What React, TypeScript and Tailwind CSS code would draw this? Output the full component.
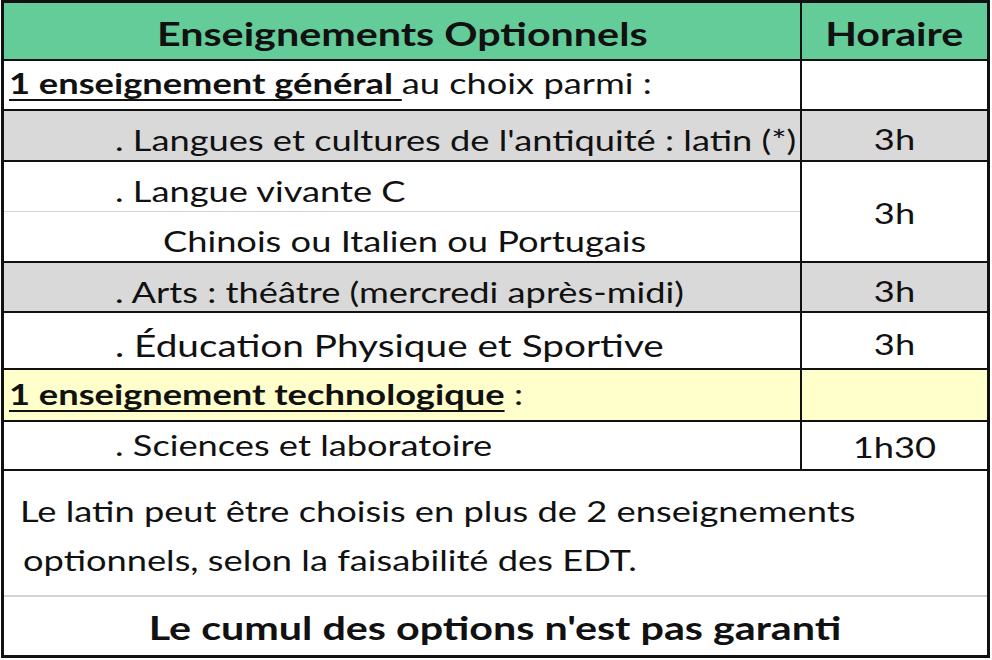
const font = { fontFamily: 'Lato, "Open Sans", sans-serif' };

// Excel export: text looks stretched horizontally, so every label is widened with scale-x-125
function Txt({ children, className = '' }: { children: React.ReactNode; className?: string }) {
  return <span className={`inline-block scale-x-125 leading-none whitespace-nowrap ${className}`}>{children}</span>;
}

function Row({
  bg = 'bg-white',
  h,
  lpad,
  rpad,
  left,
  right,
}: {
  bg?: string;
  h: string;
  lpad: string;
  rpad?: string;
  left: React.ReactNode;
  right?: React.ReactNode;
}) {
  return (
    <div className={`flex border-b-2 border-[#111] ${bg} ${h}`}>
      <div className={`w-[798px] shrink-0 border-r-2 border-[#111] flex items-end overflow-hidden ${lpad}`}>
        {left}
      </div>
      <div className={`flex-1 flex items-end justify-center ${rpad ?? ''}`}>{right}</div>
    </div>
  );
}

export default function App() {
  return (
    <div className="w-[992px] h-[660px] bg-white text-[#111]" style={font}>
      <div className="ml-[1px] w-[989px] border-[3px] border-[#111]">
        {/* header */}
        <div className="flex h-[58px] border-b-2 border-[#111] bg-[#63cc98]">
          <div className="w-[798px] shrink-0 border-r-2 border-[#111] flex items-end justify-center pb-[9px]">
            <Txt className="text-[33px] font-bold">Enseignements Optionnels</Txt>
          </div>
          <div className="flex-1 flex items-end justify-center pb-[9px]">
            <Txt className="text-[33px] font-bold">Horaire</Txt>
          </div>
        </div>

        <Row
          h="h-[50px]"
          lpad="pb-[12px] pl-[5px]"
          left={
            <Txt className="origin-left text-[29px]">
              <span className="font-bold underline underline-offset-[5px] decoration-2 [text-decoration-skip-ink:none]">
                1 enseignement général{' '}
              </span>
              au choix parmi :
            </Txt>
          }
        />
        <Row
          h="h-[51px]"
          bg="bg-[#d9d9d9]"
          lpad="pb-[6px] pl-[111px]"
          rpad="pb-[7px]"
          left={<Txt className="origin-left text-[29px]">. Langues et cultures de l'antiquité : latin (*)</Txt>}
          right={<Txt className="text-[29px]">3h</Txt>}
        />

        {/* langue vivante, horaire fusionné sur deux lignes */}
        <div className="flex h-[101px] border-b-2 border-[#111] bg-white">
          <div className="w-[798px] shrink-0 border-r-2 border-[#111] flex flex-col">
            <div className="h-[50px] border-b border-[#d4d4d4] flex items-end pb-[6px] pl-[111px]">
              <Txt className="origin-left text-[29px]">. Langue vivante C</Txt>
            </div>
            <div className="flex-1 flex items-end pb-[6px] pl-[159px]">
              <Txt className="origin-left text-[29px]">Chinois ou Italien ou Portugais</Txt>
            </div>
          </div>
          <div className="flex-1 flex items-end justify-center pb-[34px]">
            <Txt className="text-[29px]">3h</Txt>
          </div>
        </div>

        <Row
          h="h-[50px]"
          bg="bg-[#d9d9d9]"
          lpad="pb-[5px] pl-[111px]"
          rpad="pb-[6px]"
          left={<Txt className="origin-left text-[29px]">. Arts : théâtre (mercredi après-midi)</Txt>}
          right={<Txt className="text-[29px]">3h</Txt>}
        />
        <Row
          h="h-[57px]"
          lpad="pb-[7px] pl-[111px]"
          rpad="pb-[10px]"
          left={<Txt className="origin-left text-[31px]">. Éducation Physique et Sportive</Txt>}
          right={<Txt className="text-[29px]">3h</Txt>}
        />
        <Row
          h="h-[52px]"
          bg="bg-[#ffffcc]"
          lpad="pb-[12px] pl-[5px]"
          left={
            <Txt className="origin-left text-[29px]">
              <span className="font-bold underline underline-offset-[5px] decoration-2 [text-decoration-skip-ink:none]">
                1 enseignement technologique
              </span>
              {'  '}:
            </Txt>
          }
        />
        <Row
          h="h-[49px]"
          lpad="pb-[10px] pl-[111px]"
          rpad="pb-[8px]"
          left={<Txt className="origin-left text-[29px]">. Sciences et laboratoire</Txt>}
          right={<Txt className="text-[29px]">1h30</Txt>}
        />

        {/* note */}
        <div className="h-[126px] border-b-2 border-[#d4d4d4] flex flex-col pt-[15px] pl-[16px] text-[29px]">
          <p className="h-[49px] leading-[49px]">
            <span className="inline-block origin-left scale-x-125 whitespace-nowrap">
              Le latin peut être choisis en plus de 2 enseignements
            </span>
          </p>
          <p className="h-[49px] leading-[49px] pl-[3px]">
            <span className="inline-block origin-left scale-x-125 whitespace-nowrap">
              optionnels, selon la faisabilité des EDT.
            </span>
          </p>
        </div>

        <div className="h-[58px] flex items-end justify-center pb-[11px]">
          <Txt className="text-[33px] font-bold">Le cumul des options n'est pas garanti</Txt>
        </div>
      </div>
    </div>
  );
}
